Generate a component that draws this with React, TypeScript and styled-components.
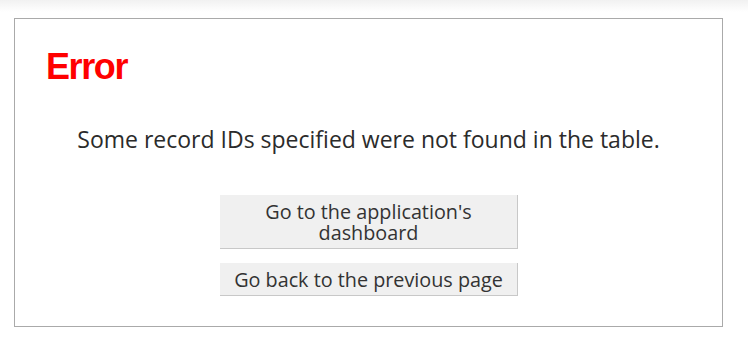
import React from "react";
import styled, { createGlobalStyle } from "styled-components";

const Global = createGlobalStyle`
  html, body { margin: 0; padding: 0; background: #fff; }
  body { font-family: "Open Sans", "Liberation Sans", sans-serif; color: #333; }
`;

const Page = styled.div`
  min-height: 342px;
  background: linear-gradient(to bottom, #f1f1f1 0px, #ffffff 12px, #ffffff 100%);
  padding: 18px 25px 16px 14px;
  box-sizing: border-box;
`;

const Panel = styled.div`
  border: 1px solid #aaa;
  background: #fff;
  height: 309px;
  box-sizing: border-box;
  padding: 28px 31px 0 31px;
  display: flex;
  flex-direction: column;
  align-items: stretch;
`;

const Title = styled.h1`
  margin: 0;
  font-family: "Liberation Sans", Arial, sans-serif;
  font-weight: 700;
  font-size: 36px;
  letter-spacing: -1.4px;
  line-height: 40px;
  color: #ff0000;
`;

const Message = styled.p`
  margin: 38px 0 0 0;
  text-align: center;
  font-size: 23px;
  line-height: 28px;
  color: #2b2b2b;
`;

const Actions = styled.div`
  margin-top: 42px;
  display: flex;
  flex-direction: column;
  align-items: center;
  gap: 14px;
`;

const ActionButton = styled.button`
  width: 298px;
  margin-left: 1px;
  background: #f0f0f0;
  border: none;
  border-right: 1px solid #c8c8c8;
  border-bottom: 1px solid #c8c8c8;
  font-family: "Open Sans", "Liberation Sans", sans-serif;
  font-size: 19.8px;
  line-height: 21px;
  color: #333;
  padding: 6px 10px 5px;
  cursor: pointer;
`;

export default function App() {
  return (
    <>
      <Global />
      <Page>
        <Panel>
          <Title>Error</Title>
          <Message>Some record IDs specified were not found in the table.</Message>
          <Actions>
            <ActionButton>Go to the application's dashboard</ActionButton>
            <ActionButton>Go back to the previous page</ActionButton>
          </Actions>
        </Panel>
      </Page>
    </>
  );
}
